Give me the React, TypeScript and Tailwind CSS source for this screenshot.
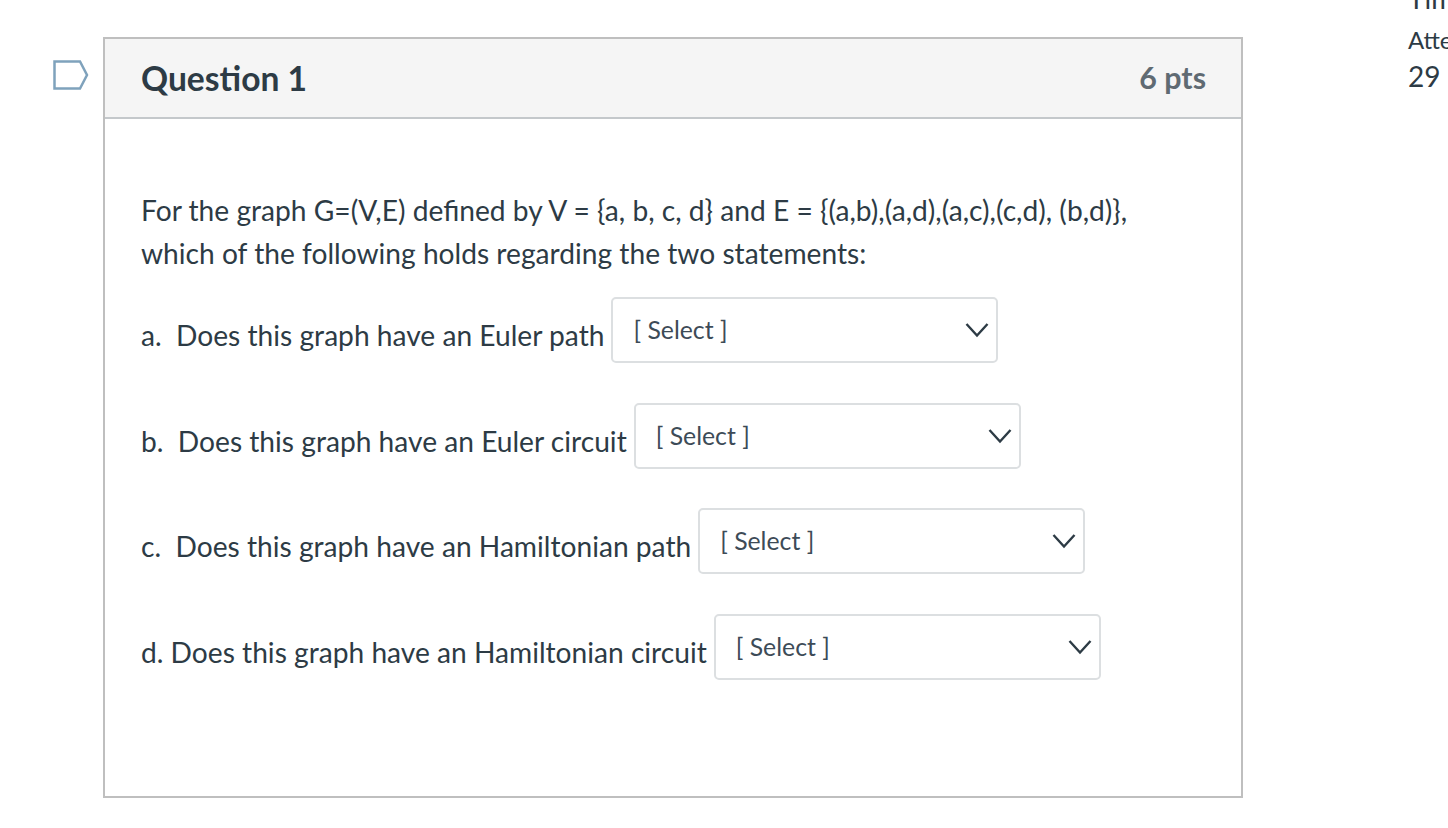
const rows = [
  { label: 'a.\u00a0 Does this graph have an Euler path', mt: 'mt-[22px]' },
  { label: 'b.\u00a0 Does this graph have an Euler circuit', mt: 'mt-[40px]' },
  { label: 'c.\u00a0 Does this graph have an Hamiltonian path', mt: 'mt-[39px]' },
  { label: 'd. Does this graph have an Hamiltonian circuit', mt: 'mt-[40px]' },
]

function Blank({ label, mt }: { label: string; mt: string }) {
  return (
    <div className={`flex items-start ${mt}`}>
      <span className="mt-[17px] whitespace-nowrap">{label}</span>
      <div className="ml-[7px] flex h-[66px] w-[387px] items-center justify-between rounded-[5px] border-2 border-[#dcdfe1] pl-[20px] pr-[7px] pb-[2px] text-[24.8px] text-[#3d4b57]">
        <span>[ Select ]</span>
        <svg className="mt-[2px] h-[16px] w-[24px]" viewBox="0 0 24 16" fill="none">
          <path d="M1.5 2L12 13.5L22.5 2" stroke="#2d3b45" strokeWidth="2.4" />
        </svg>
      </div>
    </div>
  )
}

export default function App() {
  return (
    <div className="h-[828px] w-[1448px] overflow-hidden bg-white font-['Lato','Open_Sans',sans-serif] text-[#2d3b45]">
      <div className="flex items-start">
        <svg className="ml-[52px] mt-[59px] h-[32px] w-[38px] shrink-0" viewBox="0 0 38 32" fill="none">
          <path d="M2.5 2.5H28L35 16L28 29.5H2.5Z" stroke="#7fa2bc" strokeWidth="2.5" />
        </svg>
        <section className="ml-[13px] mt-[37px] h-[761px] w-[1140px] shrink-0 border-2 border-[#bfbfbf]">
          <header className="flex h-[80px] items-center justify-between border-b-2 border-[#c4c8cb] bg-[#f5f5f5] pl-[36px] pr-[35px]">
            <h2 className="text-[33.6px] font-bold">Question 1</h2>
            <span className="text-[30.4px] font-bold text-[#5f6a72]">6 pts</span>
          </header>
          <div className="pl-[36px] pt-[70px] text-[28.16px] leading-[43px]">
            <p>For the graph G=(V,E) defined by V = {'{'}a, b, c, d{'}'} and E = {'{'}(a,b),(a,d),(a,c),(c,d), (b,d){'}'},</p>
            <p>which of the following holds regarding the two statements:</p>
            {rows.map((row) => (
              <Blank key={row.label} label={row.label} mt={row.mt} />
            ))}
          </div>
        </section>
        <aside className="ml-[165px] -mt-[19px] shrink-0 whitespace-nowrap">
          <p className="text-[28px] leading-[34px]">Time</p>
          <p className="mt-[10px] text-[24px] leading-[30px]">Attempt</p>
          <p className="mt-[4px] text-[28px] leading-[34px]">29</p>
        </aside>
      </div>
    </div>
  )
}
